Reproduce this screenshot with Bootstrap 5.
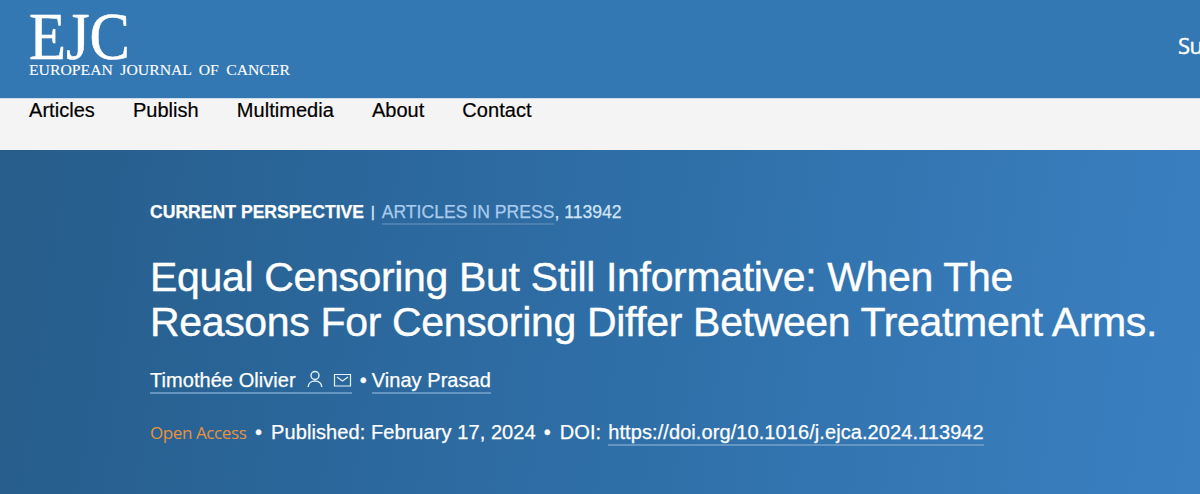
<!DOCTYPE html>
<html lang="en">
<head>
  <meta charset="UTF-8">
  <meta name="viewport" content="width=device-width, initial-scale=1.0">
  <title>European Journal of Cancer</title>
  <link href="https://cdn.jsdelivr.net/npm/bootstrap@5.3.0/dist/css/bootstrap.min.css" rel="stylesheet">
  <script src="https://cdn.jsdelivr.net/npm/bootstrap@5.3.0/dist/js/bootstrap.bundle.min.js"></script>
  <style>
    body { font-family: "Liberation Sans", Arial, sans-serif; font-size: 20px; line-height: 23px; }
    .site-header { height: 98px; background: #3377b3; padding-left: 28px; }
    .subscribe { width: 22px; font: 22px/26px "Open Sans", sans-serif; padding-bottom: 9px; letter-spacing: -.5px; -webkit-text-stroke: .4px; }
    .site-nav { height: 52px; background: #f4f4f4; gap: 38px; padding-left: 29px; border-top: 1px solid #cfdeea; letter-spacing: .04px; -webkit-text-stroke: .2px; }
    .site-nav .nav-link { color: #000; padding: 0; }
    .hero { height: 344px; padding: 52px 0 0 150px; background: linear-gradient(98deg, #265d8b 0%, #2e6da5 48%, #3a80c1 100%); -webkit-text-stroke: .25px; }
    .kicker { font-size: 17.6px; color: #d3e5f6; }
    .kicker a { color: #a9cbed; }
    .kicker strong { color: #fff; }
    .kicker-bar { font-size: 14px; margin: 0 7px; -webkit-text-stroke: .5px; }
    .hero-link { color: inherit; text-decoration: none; border-bottom: 2px solid #6595c1; }
    .kicker .hero-link { border-color: #4b80b1; }
    .kicker a, .kicker span, .kicker strong { line-height: 21px; }
    .article-title { font-size: 41px; line-height: 45px; margin: 30px 0 0; font-weight: 400; letter-spacing: -.34px; -webkit-text-stroke: .4px; }
    .authors { margin-top: 24px; letter-spacing: .05px; }
    .person-icon { margin-left: 11px; }
    .mail-icon { margin-left: 10px; }
    .authors-dot { margin: 0 5px 0 8px; }
    .meta { margin-top: 27px; letter-spacing: .08px; }
    .open-access { width: 97px; color: #e8923a; font: 17px/24px "Open Sans", sans-serif; letter-spacing: -.4px; -webkit-text-stroke: 0; }
    .meta-dot { margin: 0 9px 0 8px; }
    .doi-label { margin-right: 7px; }
  </style>
</head>
<body class="overflow-hidden">
  <header class="site-header d-flex justify-content-between align-items-center text-white overflow-hidden">
    <svg width="264" height="98" fill="#fff" font-family="Liberation Serif, serif" aria-label="European Journal of Cancer">
      <text x="1" y="59" font-size="68" textLength="101" lengthAdjust="spacingAndGlyphs" stroke="#fff" stroke-width=".6">EJC</text>
      <text x="1" y="75" font-size="14" textLength="261" lengthAdjust="spacingAndGlyphs" word-spacing="3" stroke="#fff" stroke-width=".1">EUROPEAN JOURNAL OF CANCER</text>
    </svg>
    <div class="subscribe text-nowrap">Su</div>
  </header>

  <nav class="site-nav nav flex-nowrap">
    <a class="nav-link" href="#">Articles</a>
    <a class="nav-link" href="#">Publish</a>
    <a class="nav-link" href="#">Multimedia</a>
    <a class="nav-link" href="#">About</a>
    <a class="nav-link" href="#">Contact</a>
  </nav>

  <main class="hero text-white text-nowrap">
    <div class="kicker d-flex">
      <strong>CURRENT PERSPECTIVE</strong>
      <span class="kicker-bar">|</span>
      <a class="hero-link" href="#">ARTICLES IN PRESS</a><span>, 113942</span>
    </div>
    <h1 class="article-title">Equal Censoring But Still Informative: When The<br>Reasons For Censoring Differ Between Treatment Arms.</h1>

    <div class="authors d-flex">
      <a class="hero-link d-flex" href="#">
        <span>Timothée Olivier</span>
        <svg class="person-icon" width="16" height="20" fill="none" stroke="#e3f1fc" stroke-width="1.4"><circle cx="8" cy="6.5" r="4"/><path d="M1.200 18C1.200 10 14.800 10 14.800 18"/></svg>
        <svg class="mail-icon" width="19" height="20" fill="none" stroke="#e3f1fc" stroke-width="1.2"><path d="M1.500 5.500h16v11.500h-16zM4 8l5.500 4L15 8"/></svg>
      </a>
      <span class="authors-dot">•</span>
      <a class="hero-link" href="#">Vinay Prasad</a>
    </div>

    <div class="meta d-flex">
      <span class="open-access">Open Access</span>
      <span class="meta-dot">•</span>
      <span>Published: February 17, 2024</span>
      <span class="meta-dot">•</span>
      <span class="doi-label">DOI:</span>
      <a class="hero-link" href="#">https://doi.org/10.1016/j.ejca.2024.113942</a>
    </div>
  </main>
</body>
</html>
